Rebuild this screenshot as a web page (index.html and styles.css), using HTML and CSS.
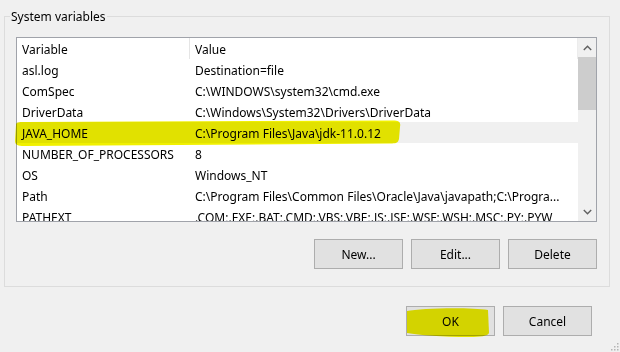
FILE: index.html
```html
<!DOCTYPE html>
<html lang="en">
<head>
<meta charset="utf-8">
<title>Environment Variables</title>
<link rel="stylesheet" href="styles.css">
</head>
<body>
<div class="page">
  <fieldset class="group">
    <legend>System variables</legend>
    <div class="list">
      <div class="grid">
        <div class="row head"><span class="c1">Variable</span><span class="c2">Value</span></div>
        <div class="row"><span class="c1">asl.log</span><span class="c2">Destination=file</span></div>
        <div class="row"><span class="c1">ComSpec</span><span class="c2">C:\WINDOWS\system32\cmd.exe</span></div>
        <div class="row"><span class="c1">DriverData</span><span class="c2">C:\Windows\System32\Drivers\DriverData</span></div>
        <div class="row selected"><span class="c1">JAVA_HOME</span><span class="c2">C:\Program Files\Java\jdk-11.0.12</span></div>
        <div class="row"><span class="c1">NUMBER_OF_PROCESSORS</span><span class="c2">8</span></div>
        <div class="row"><span class="c1">OS</span><span class="c2">Windows_NT</span></div>
        <div class="row"><span class="c1">Path</span><span class="c2">C:\Program Files\Common Files\Oracle\Java\javapath;C:\Progra...</span></div>
        <div class="row"><span class="c1">PATHEXT</span><span class="c2">.COM;.EXE;.BAT;.CMD;.VBS;.VBE;.JS;.JSE;.WSF;.WSH;.MSC;.PY;.PYW</span></div>
      </div>
      <div class="scrollbar">
        <div class="arrow up"><svg width="9" height="6" viewBox="0 0 9 6"><polyline points="0.8,5 4.5,1.3 8.2,5" fill="none" stroke="#606060" stroke-width="1.4"/></svg></div>
        <div class="track"><div class="thumb"></div></div>
        <div class="arrow down"><svg width="9" height="6" viewBox="0 0 9 6"><polyline points="0.8,1 4.5,4.7 8.2,1" fill="none" stroke="#606060" stroke-width="1.4"/></svg></div>
      </div>
    </div>
    <div class="actions">
      <button class="btn">New...</button>
      <button class="btn">Edit...</button>
      <button class="btn">Delete</button>
    </div>
  </fieldset>
  <div class="dialog-actions">
    <button class="btn">OK</button>
    <button class="btn">Cancel</button>
  </div>
  <svg class="marks" width="620" height="352" viewBox="0 0 620 352">
    <path d="M16,125 C16,122 19,122 24,122 L393,120.5 C399,120.5 401,122 400,127 L399,139 C398,143 396,143.5 390,143.5 L24,146 C18,146 15,145 15,141 Z" fill="#f0f000"/>
    <path d="M407,311 C420,308 470,307 488,310 L489,333 C488,336 480,337 470,337 C440,337 420,335 407,333 Z" fill="#f0f000"/>
  </svg>
  <svg class="grip" width="9" height="9" viewBox="0 0 9 9">
    <rect x="7" y="1" width="1.5" height="1.5" fill="#b4b4b4"/>
    <rect x="7" y="4" width="1.5" height="1.5" fill="#b4b4b4"/>
    <rect x="4" y="4" width="1.5" height="1.5" fill="#b4b4b4"/>
    <rect x="7" y="7" width="1.5" height="1.5" fill="#b4b4b4"/>
    <rect x="4" y="7" width="1.5" height="1.5" fill="#b4b4b4"/>
    <rect x="1" y="7" width="1.5" height="1.5" fill="#b4b4b4"/>
  </svg>
</div>
</body>
</html>
```

FILE: styles.css
```css
* { box-sizing: border-box; }
html, body {
  margin: 0;
  padding: 0;
  background: #f0f0f0;
}
body {
  width: 620px;
  height: 352px;
  overflow: hidden;
  font-family: "Noto Sans", "Open Sans", sans-serif;
  font-size: 12px;
  color: #000;
}
.page {
  position: relative;
  width: 620px;
  height: 352px;
  padding-top: 8px;
}
.group {
  margin: 0 0 0 4px;
  width: 606px;
  border: 1px solid #dcdcdc;
  padding: 0 12px 17px 0;
  min-width: 0;
}
.group legend {
  margin-left: 5px;
  padding: 0 1px;
  line-height: 17px;
  height: 16px;
}
.list {
  margin: 13px 0 0 11px;
  height: 185px;
  border: 1px solid #a0a3aa;
  background: #fff;
  display: flex;
  overflow: hidden;
}
.grid {
  flex: 1;
  min-width: 0;
  overflow: hidden;
}
.row {
  display: grid;
  grid-template-columns: 173px 1fr;
  height: 21px;
  line-height: 24px;
  white-space: nowrap;
}
.row span {
  overflow: hidden;
  height: 21px;
}
.c1 { padding-left: 5px; }
.c2 { padding-left: 5px; }
.head .c1 { border-right: 1px solid #e5e5e5; }
.head { border-right: 1px solid #ececec; }
.selected { background: #f0f0f0; }
.scrollbar {
  width: 18px;
  flex: none;
  background: #f0f0f0;
  display: flex;
  flex-direction: column;
}
.arrow {
  height: 18px;
  flex: none;
  display: flex;
  align-items: center;
  justify-content: center;
}
.arrow.up { height: 19px; padding-top: 1px; }
.arrow.down { padding-bottom: 1px; }
.track { flex: 1; }
.thumb {
  height: 53px;
  background: #cdcdcd;
}
.actions {
  margin: 17px 0 0 11px;
  display: flex;
  justify-content: flex-end;
  gap: 8px;
}
.btn {
  width: 89px;
  height: 30px;
  padding: 1px 0 0;
  background: #e1e1e1;
  border: 1px solid #adadad;
  border-radius: 0;
  font-family: inherit;
  font-size: 12px;
  color: #000;
}
.dialog-actions {
  margin: 19px 28px 0 0;
  display: flex;
  justify-content: flex-end;
  gap: 8px;
}
.marks {
  position: absolute;
  left: 0;
  top: 0;
  mix-blend-mode: multiply;
  pointer-events: none;
}
.grip {
  position: absolute;
  right: 1px;
  bottom: 1px;
}
```
